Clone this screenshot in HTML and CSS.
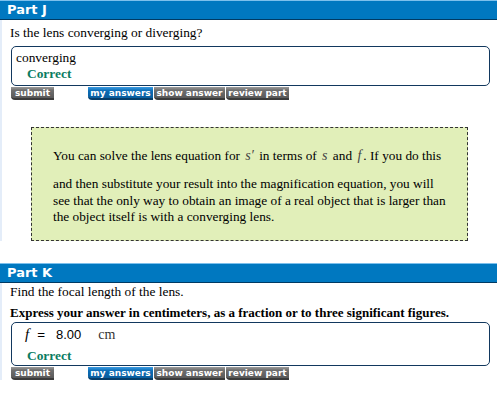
FILE: index.html
```html
<!DOCTYPE html>
<html>
<head>
<meta charset="utf-8">
<link rel="stylesheet" href="styles.css">
</head>
<body>
<div class="part">
  <div class="part-head">Part J</div>
  <div class="part-body">
    <p class="q">Is the lens converging or diverging?</p>
    <div class="answer">
      <div class="ans-text">converging</div>
      <div class="correct">Correct</div>
    </div>
    <div class="buttons">
      <span class="btn grey w-submit">submit</span>
      <span class="btn blue w-my">my answers</span>
      <span class="btn grey w-show">show answer</span>
      <span class="btn grey w-review">review part</span>
    </div>
    <div class="hint">
      <p class="hint-text"><span class="first">You can solve the lens equation for <span class="m">s&prime;</span> in terms of <span class="m">s</span> and <span class="m">f</span>. If you do this</span><br>and then substitute your result into the magnification equation, you will<br>see that the only way to obtain an image of a real object that is larger than<br>the object itself is with a converging lens.</p>
    </div>
  </div>
</div>
<div class="part part-k">
  <div class="part-head">Part K</div>
  <div class="part-body">
    <p class="q">Find the focal length of the lens.</p>
    <p class="q bold">Express your answer in centimeters, as a fraction or to three significant figures.</p>
    <div class="answer answer-k">
      <div class="eq"><span class="var">f</span><span class="eqs">=</span><span class="num">8.00</span><span class="unit">cm</span></div>
      <div class="correct">Correct</div>
    </div>
    <div class="buttons">
      <span class="btn grey w-submit">submit</span>
      <span class="btn blue w-my">my answers</span>
      <span class="btn grey w-show">show answer</span>
      <span class="btn grey w-review">review part</span>
    </div>
  </div>
</div>
</body>
</html>
```
FILE: styles.css
```css
html, body {
  margin: 0;
  padding: 0;
  background: #ffffff;
}
body {
  width: 497px;
  height: 396px;
  overflow: hidden;
  font-family: "Liberation Serif", "Times New Roman", serif;
  font-size: 13.4px;
  color: #000;
}
.part-head {
  height: 18px;
  border-top: 1px solid #7cc0ec;
  border-bottom: 1px solid #003a63;
  background: #0078c0;
  color: #fff;
  font-family: "DejaVu Sans", Verdana, sans-serif;
  font-weight: bold;
  font-size: 13px;
  line-height: 18px;
  padding-left: 7px;
}
.part-body {
  border-left: 2px solid #e4edf9;
  padding: 5px 0 0 8px;
}
.q {
  margin: 0;
  line-height: 16px;
}
.bold {
  font-weight: bold;
  font-size: 13px;
  margin-top: 5px;
}
.answer {
  margin-top: 5px;
  margin-left: 1px;
  width: 469px;
  border: 1px solid #12385e;
  border-radius: 5px;
  padding: 3px 4px 3px 4px;
  line-height: 16px;
}
.correct {
  color: #0b7c62;
  font-weight: bold;
  padding-left: 11px;
}
.buttons {
  display: flex;
  margin-left: 1px;
  margin-top: 1px;
  gap: 1px;
}
.btn {
  display: block;
  height: 11px;
  line-height: 12px;
  font-family: "DejaVu Sans", Verdana, sans-serif;
  font-weight: bold;
  font-size: 9px;
  color: #fff;
  text-align: center;
  border-radius: 0 0 0 4px;
  border-bottom: 2px solid #3a3a3a;
}
.grey {
  background: linear-gradient(#9a9a9a, #6e6e6e 30%, #5a5a5a);
}
.blue {
  background: linear-gradient(#3a9ae0, #0a6cb6 35%, #0a5e9e);
  border-bottom-color: #063d68;
}
.w-submit { width: 43px; margin-right: 33px; }
.w-my { width: 65px; }
.w-show { width: 71px; }
.w-review { width: 63px; }
.hint {
  margin: 27px 0 0 21px;
  width: 437px;
  border: 1px dashed #333;
  background: #e1efb9;
  padding: 14px 0 14px 21px;
  box-sizing: border-box;
}
.hint-text {
  margin: 0;
  line-height: 16.5px;
  font-size: 13.3px;
}
.first {
  display: inline-block;
  line-height: 28px;
  margin-bottom: 6px;
}
.m {
  font-style: italic;
  color: #444;
  font-size: 14px;
  padding: 0 2px;
}
.part-k {
  margin-top: 22px;
}
.part-k .part-body {
  padding-top: 1px;
}
.answer-k {
  margin-top: 1px;
  padding-top: 1px;
  padding-bottom: 1px;
}
.eq {
  padding-left: 9px;
  height: 20px;
  line-height: 20px;
  margin-bottom: 4px;
}
.var {
  font-style: italic;
  font-size: 15px;
}
.eqs {
  font-family: "Liberation Sans", Arial, sans-serif;
  margin-left: 8px;
}
.num {
  font-family: "Liberation Sans", Arial, sans-serif;
  margin-left: 11px;
  font-size: 13px;
}
.unit {
  color: #333;
  margin-left: 17px;
  font-size: 14px;
}
```
